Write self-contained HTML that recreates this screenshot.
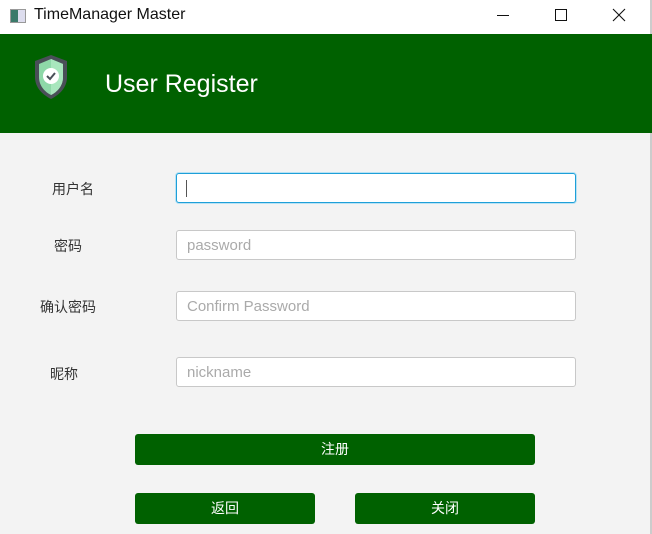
<!DOCTYPE html>
<html><head><meta charset="utf-8"><style>
body{margin:0;width:652px;height:534px;background:#f3f3f3;position:relative;overflow:hidden;font-family:"Liberation Sans","Noto Sans CJK SC",sans-serif;}
.a{position:absolute}
.tb{left:0;top:0;width:652px;height:34px;background:#fff}
.hd{left:0;top:34px;width:652px;height:99px;background:#006100}
.lbl{font-size:14px;color:#333}
.in{background:#fff;border:1px solid #c8c8c8;border-radius:3px;box-sizing:border-box;height:30px;width:400px;left:176px;font-size:15px;color:#aaa;padding-left:10px;line-height:30px}
.btn{background:#006100;border-radius:3px;color:#fff;font-size:14px;text-align:center;height:31px;line-height:31px}
</style></head><body>
<div class="a tb">
 <div class="a" style="left:10px;top:9px;width:14px;height:12px;border:1px solid #999;background:linear-gradient(90deg,#3a7a6a 0 50%,#dde 50%)"></div>
 <div class="a" style="left:34px;top:6px;font-size:16px;color:#111">TimeManager Master</div>
 <div class="a" style="left:497px;top:15px;width:12px;height:1px;background:#111"></div>
 <div class="a" style="left:555px;top:9px;width:10px;height:10px;border:1px solid #111"></div>
 <svg class="a" style="left:612px;top:8px" width="14" height="14"><path d="M1 1L13 13M13 1L1 13" stroke="#111" stroke-width="1.1"/></svg>
</div>
<div class="a" style="left:650px;top:0;width:2px;height:534px;background:#ccc"></div>
<div class="a hd">
 <svg class="a" style="left:33px;top:20px" width="36" height="46" viewBox="0 0 36 46">
  <path d="M18 1L34 7V23C34 34 26 41 18 45C10 41 2 34 2 23V7Z" fill="#4a4f58"/>
  <path d="M18 5L30 10V23C30 32 24 38 18 41C12 38 6 32 6 23V10Z" fill="#8ed8a8"/>
  <path d="M18 5L30 10V23C30 32 24 38 18 41Z" fill="#a8e6bd"/>
  <circle cx="18" cy="22" r="8" fill="#fff"/>
  <path d="M14 22L17 25L22 19" stroke="#4a4f58" stroke-width="2" fill="none"/>
 </svg>
 <div class="a" style="left:105px;top:36px;font-size:25px;color:#fff">User Register</div>
</div>
<div class="a lbl" style="left:52px;top:179px">用户名</div>
<div class="a lbl" style="left:54px;top:236px">密码</div>
<div class="a lbl" style="left:40px;top:297px">确认密码</div>
<div class="a lbl" style="left:50px;top:364px">昵称</div>
<div class="a in" style="top:173px;border:1px solid #1e9fd8;box-shadow:0 0 0 1px #b8e2f4;border-radius:3px;line-height:28px"><span style="display:inline-block;width:1px;height:17px;background:#555;vertical-align:middle;margin-left:-1px"></span></div>
<div class="a in" style="top:230px">password</div>
<div class="a in" style="top:291px">Confirm Password</div>
<div class="a in" style="top:357px">nickname</div>
<div class="a btn" style="left:135px;top:434px;width:400px">注册</div>
<div class="a btn" style="left:135px;top:493px;width:180px">返回</div>
<div class="a btn" style="left:355px;top:493px;width:180px">关闭</div>
</body></html>
